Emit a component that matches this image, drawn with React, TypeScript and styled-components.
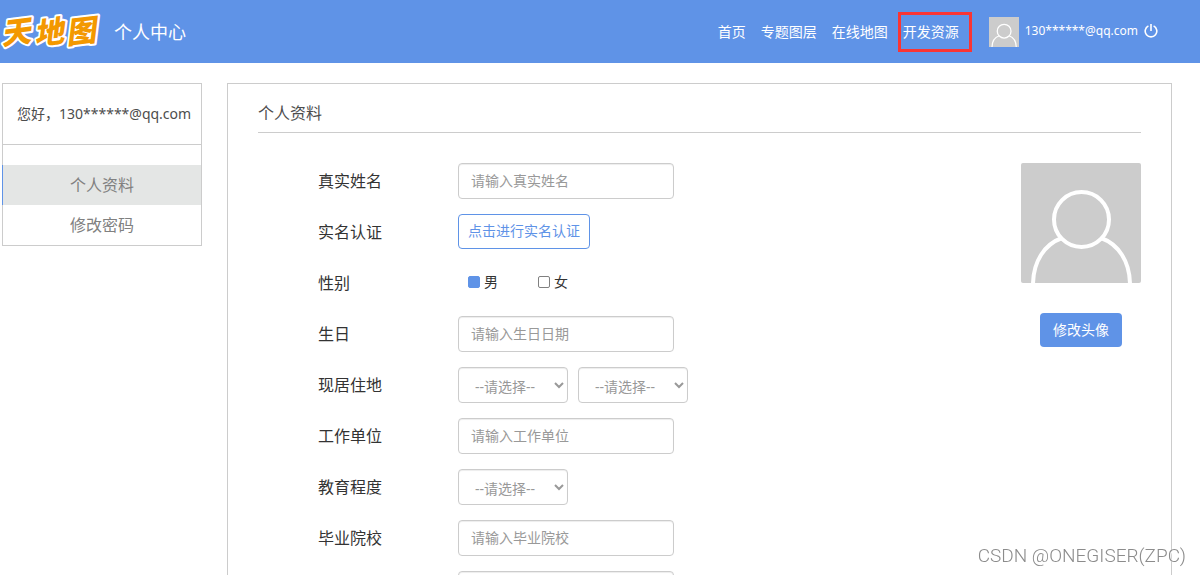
import React from "react";
import styled, { createGlobalStyle } from "styled-components";

const GlobalStyle = createGlobalStyle`
  *, *::before, *::after { box-sizing: border-box; }
  body {
    margin: 0;
    background: #fff;
    color: #333;
    font-family: "Noto Sans", "Noto Sans CJK SC", sans-serif;
    font-size: 14px;
    line-height: 20px;
  }
  a { color: inherit; text-decoration: none; }
  h1, h2, p, ul { margin: 0; padding: 0; font-weight: 400; }
  ul { list-style: none; }
  button, input, select { font: inherit; margin: 0; }
`;

const Header = styled.header`
  display: flex;
  align-items: center;
  height: 63px;
  padding: 0 42px 0 2px;
  background: #5f93e7;
  color: #fff;
`;

const Logo = styled.a`
  display: block;
  width: 98px;
  height: 40px;
`;

const LogoText = styled.text`
  font-family: "Noto Sans CJK SC", sans-serif;
  font-size: 30px;
  font-weight: 900;
  font-style: italic;
  fill: #f39800;
  stroke: #fff;
  stroke-width: 4px;
  stroke-linejoin: round;
  paint-order: stroke;
`;

const HeaderTitle = styled.h1`
  margin-left: 14px;
  font-size: 18px;
  line-height: 24px;
`;

const Nav = styled.nav`
  display: flex;
  gap: 15px;
  margin-left: auto;
`;

const NavLink = styled.a`
  position: relative;
`;

const Highlight = styled.span`
  position: absolute;
  top: -10px;
  left: -5px;
  right: -13px;
  bottom: -10px;
  border: 3px solid #fa3534;
  pointer-events: none;
`;

const UserBox = styled.div`
  display: flex;
  align-items: center;
  gap: 6px;
  margin-left: 30px;
`;

const UserInfo = styled.div`
  display: flex;
  align-items: center;
  gap: 6px;
  padding-bottom: 2px;
  font-size: 12px;
`;

const PowerButton = styled.button`
  display: block;
  width: 14px;
  height: 14px;
  padding: 0;
  border: 0;
  background: none;
  color: #fff;
  svg { display: block; }
`;

const AvatarBox = styled.svg<{ $size: number }>`
  display: block;
  width: ${(p) => p.$size}px;
  height: ${(p) => p.$size}px;
  border-radius: ${(p) => (p.$size > 60 ? 2 : 0)}px;
  background: #ccc;
`;

const Page = styled.div`
  display: flex;
  align-items: flex-start;
  gap: 25px;
  padding: 20px 28px 40px 2px;
`;

const Sidebar = styled.aside`
  flex: 0 0 200px;
  min-width: 0;
  border: 1px solid #ccc;
`;

const Greeting = styled.p`
  padding: 20px 8px 20px 14px;
  border-bottom: 1px solid #ccc;
  color: #4d4d4d;
  white-space: nowrap;
`;

const Menu = styled.ul`
  padding-top: 20px;
`;

const MenuLink = styled.a<{ $active?: boolean }>`
  display: block;
  margin-left: -1px;
  border-left: 1px solid ${(p) => (p.$active ? "#5f93e7" : "#ccc")};
  background: ${(p) => (p.$active ? "#e4e6e5" : "transparent")};
  color: #808080;
  font-size: 16px;
  line-height: 40px;
  text-align: center;
`;

const Panel = styled.main`
  flex: 1;
  padding: 0 30px 30px;
  border: 1px solid #ccc;
`;

const PanelTitle = styled.h2`
  padding: 17px 0 7px;
  border-bottom: 1px solid #ccc;
  color: #4d4d4d;
  font-size: 16px;
  line-height: 24px;
`;

const PanelBody = styled.div`
  display: flex;
  justify-content: space-between;
  padding: 30px 0 0 60px;
`;

const Form = styled.form`
  display: flex;
  flex-direction: column;
  gap: 15px;
`;

const Row = styled.div`
  display: grid;
  grid-template-columns: 140px auto;
  align-items: center;
  height: 36px;
`;

const labelText = `
  font-size: 16px;
  line-height: 24px;
`;
const Label = styled.label`${labelText}`;
const LabelText = styled.span`${labelText}`;

const Controls = styled.div`
  display: flex;
  align-self: start;
  gap: 10px;
`;

const TextInput = styled.input`
  width: 216px;
  height: 36px;
  padding: 0 12px 2px;
  border: 1px solid #ccc;
  border-radius: 4px;
  background: #fff;
  box-shadow: inset 0 1px 1px rgba(0, 0, 0, 0.075);
  color: #555;
  &::placeholder { color: #999; opacity: 1; }
`;

const Select = styled.select`
  width: 110px;
  height: 36px;
  padding: 2px 12px 0;
  border: 1px solid #ccc;
  border-radius: 4px;
  background: #fff;
  box-shadow: inset 0 1px 1px rgba(0, 0, 0, 0.075);
  color: #999;
`;

const OutlineButton = styled.button`
  height: 35px;
  padding: 0 9px 2px;
  border: 1px solid #5f93e7;
  border-radius: 4px;
  background: #fff;
  color: #5f93e7;
`;

const PrimaryButton = styled.button`
  height: 34px;
  padding: 0 13px;
  border: 0;
  border-radius: 4px;
  background: #5f93e7;
  color: #fff;
`;

const Choices = styled.div`
  display: flex;
  gap: 40px;
  padding: 0 0 2px 10px;
`;

const Choice = styled.label`
  display: flex;
  align-items: center;
  gap: 4px;
`;

const CheckBox = styled.input`
  appearance: none;
  width: 12px;
  height: 12px;
  margin: 0;
  border: 1px solid #808080;
  border-radius: 2px;
  background: #fff;
  &:checked { border-color: #5f93e7; background: #5f93e7; }
`;

const PhotoColumn = styled.div`
  display: flex;
  flex-direction: column;
  align-items: center;
  gap: 30px;
`;

const Watermark = styled.div`
  position: fixed;
  right: 14px;
  bottom: 7px;
  color: #8c8c8c;
  font-family: Roboto, "Liberation Sans", sans-serif;
  font-size: 19px;
  font-weight: 300;
  line-height: 24px;
  text-shadow: 1px 1px 0 #fff;
`;

function Avatar({ size, stroke }: { size: number; stroke: number }) {
  return (
    <AvatarBox $size={size} viewBox="0 0 120 120" fill="none" stroke="#fff" strokeWidth={stroke} aria-hidden="true">
      <path d="M12 122C12 98 24 81 41 75M80 75C97 81 109 98 109 122" />
      <circle cx="60.5" cy="56.5" r="27.5" />
    </AvatarBox>
  );
}

function SelectField({ id, label }: { id: string; label?: string }) {
  return (
    <Select id={id} aria-label={label}>
      <option>--请选择--</option>
    </Select>
  );
}

function TextRow({ id, label, hint }: { id: string; label: string; hint: string }) {
  return (
    <Row>
      <Label htmlFor={id}>{label}</Label>
      <TextInput id={id} type="text" placeholder={hint} />
    </Row>
  );
}

export default function App() {
  return (
    <>
      <GlobalStyle />
      <Header>
        <Logo href="#home">
          <svg width="98" height="40" viewBox="0 0 98 40" overflow="visible">
            <LogoText x="0 33 65" y="33 33 32" rotate="-7">天地图</LogoText>
          </svg>
        </Logo>
        <HeaderTitle>个人中心</HeaderTitle>
        <Nav>
          <NavLink href="#home">首页</NavLink>
          <NavLink href="#layers">专题图层</NavLink>
          <NavLink href="#map">在线地图</NavLink>
          <NavLink href="#dev">开发资源<Highlight /></NavLink>
        </Nav>
        <UserBox>
          <Avatar size={30} stroke={5} />
          <UserInfo>
            <span>130******@qq.com</span>
            <PowerButton type="button" aria-label="退出">
              <svg width="14" height="14" viewBox="0 0 14 14" fill="none" stroke="currentColor" strokeWidth="1.6">
                <path d="M4.4 1.9A5.8 5.8 0 1 0 9.6 1.9M7 0V7" />
              </svg>
            </PowerButton>
          </UserInfo>
        </UserBox>
      </Header>
      <Page>
        <Sidebar>
          <Greeting>您好，130******@qq.com</Greeting>
          <Menu>
            <li><MenuLink href="#profile" $active>个人资料</MenuLink></li>
            <li><MenuLink href="#password">修改密码</MenuLink></li>
          </Menu>
        </Sidebar>
        <Panel>
          <PanelTitle>个人资料</PanelTitle>
          <PanelBody>
            <Form>
              <TextRow id="name" label="真实姓名" hint="请输入真实姓名" />
              <Row>
                <LabelText>实名认证</LabelText>
                <Controls><OutlineButton type="button">点击进行实名认证</OutlineButton></Controls>
              </Row>
              <Row>
                <LabelText>性别</LabelText>
                <Choices>
                  <Choice><CheckBox type="checkbox" defaultChecked />男</Choice>
                  <Choice><CheckBox type="checkbox" />女</Choice>
                </Choices>
              </Row>
              <TextRow id="birthday" label="生日" hint="请输入生日日期" />
              <Row>
                <Label htmlFor="province">现居住地</Label>
                <Controls>
                  <SelectField id="province" />
                  <SelectField id="city" label="城市" />
                </Controls>
              </Row>
              <TextRow id="company" label="工作单位" hint="请输入工作单位" />
              <Row>
                <Label htmlFor="education">教育程度</Label>
                <SelectField id="education" />
              </Row>
              <TextRow id="school" label="毕业院校" hint="请输入毕业院校" />
              <TextRow id="major" label="" hint="" />
            </Form>
            <PhotoColumn>
              <Avatar size={120} stroke={4} />
              <PrimaryButton type="button">修改头像</PrimaryButton>
            </PhotoColumn>
          </PanelBody>
        </Panel>
      </Page>
      <Watermark>CSDN @ONEGISER(ZPC)</Watermark>
    </>
  );
}
